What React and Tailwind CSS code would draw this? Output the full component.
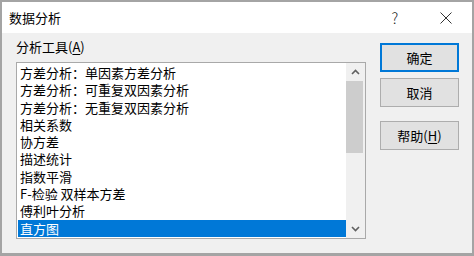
import React from 'react';

const ITEMS = [
  '方差分析：单因素方差分析',
  '方差分析：可重复双因素分析',
  '方差分析：无重复双因素分析',
  '相关系数',
  '协方差',
  '描述统计',
  '指数平滑',
  'F-检验 双样本方差',
  '傅利叶分析',
  '直方图',
];

const FONT = { fontFamily: '"Noto Sans CJK SC", "Noto Sans", sans-serif' };

const DialogButton = ({ children, primary, className = '' }) => (
  <div
    className={`w-[79px] h-[29px] flex items-center justify-center bg-[#e1e1e1] text-[13px] text-black ${
      primary ? 'border-2 border-[#0078d7]' : 'border border-[#adadad]'
    } ${className}`}
  >
    {children}
  </div>
);

export default function App() {
  return (
    <div
      className="w-[474px] h-[256px] flex flex-col border-2 border-b-[3px] border-[#a4a4a4] bg-[#f0f0f0] overflow-hidden"
      style={FONT}
    >
      {/* title bar */}
      <div className="h-[31px] bg-white flex items-center shrink-0">
        <div className="pl-[7px] text-[13px] text-black leading-none">数据分析</div>
        <div className="ml-auto w-[20px] text-center text-[15px] font-light text-[#222] leading-none mr-[35px]">?</div>
        <svg width="12" height="12" viewBox="0 0 12 12" className="mr-[20px]">
          <path d="M0.5 0.5 L11.5 11.5 M11.5 0.5 L0.5 11.5" stroke="#333" strokeWidth="1" fill="none" />
        </svg>
      </div>

      {/* body */}
      <div className="flex flex-1">
        <div className="ml-[14px] pt-[4px] flex flex-col">
          <div className="h-[20px] leading-[20px] text-[13px] text-black">
            分析工具(<span className="underline underline-offset-2">A</span>)
          </div>
          <div className="mt-[5px] w-[350px] h-[177px] border border-[#a9a9a9] bg-white flex">
            <div className="flex-1 pt-[1px] pl-[1px]">
              {ITEMS.map((item, i) => (
                <div
                  key={item}
                  className={`h-[17.3px] leading-[17.3px] pl-[2px] text-[13px] whitespace-nowrap ${
                    i === ITEMS.length - 1 ? 'bg-[#0078d7] text-white' : 'text-black'
                  }`}
                >
                  {item}
                </div>
              ))}
            </div>
            {/* scrollbar */}
            <div className="w-[19px] flex flex-col bg-[#f0f0f0]">
              <div className="h-[18px] flex items-center justify-center">
                <svg width="9" height="6" viewBox="0 0 9 6">
                  <path d="M1 5 L4.5 1.5 L8 5" stroke="#606060" strokeWidth="1.6" fill="none" />
                </svg>
              </div>
              <div className="h-[72px] w-[17px] bg-[#cdcdcd]" />
              <div className="flex-1" />
              <div className="h-[18px] flex items-center justify-center">
                <svg width="9" height="6" viewBox="0 0 9 6">
                  <path d="M1 1 L4.5 4.5 L8 1" stroke="#606060" strokeWidth="1.6" fill="none" />
                </svg>
              </div>
            </div>
          </div>
        </div>

        <div className="ml-[14px] pt-[10px] flex flex-col">
          <DialogButton primary>确定</DialogButton>
          <DialogButton className="mt-[6px]">取消</DialogButton>
          <DialogButton className="mt-[14px]">
            帮助(<span className="underline underline-offset-2">H</span>)
          </DialogButton>
        </div>
      </div>
    </div>
  );
}
